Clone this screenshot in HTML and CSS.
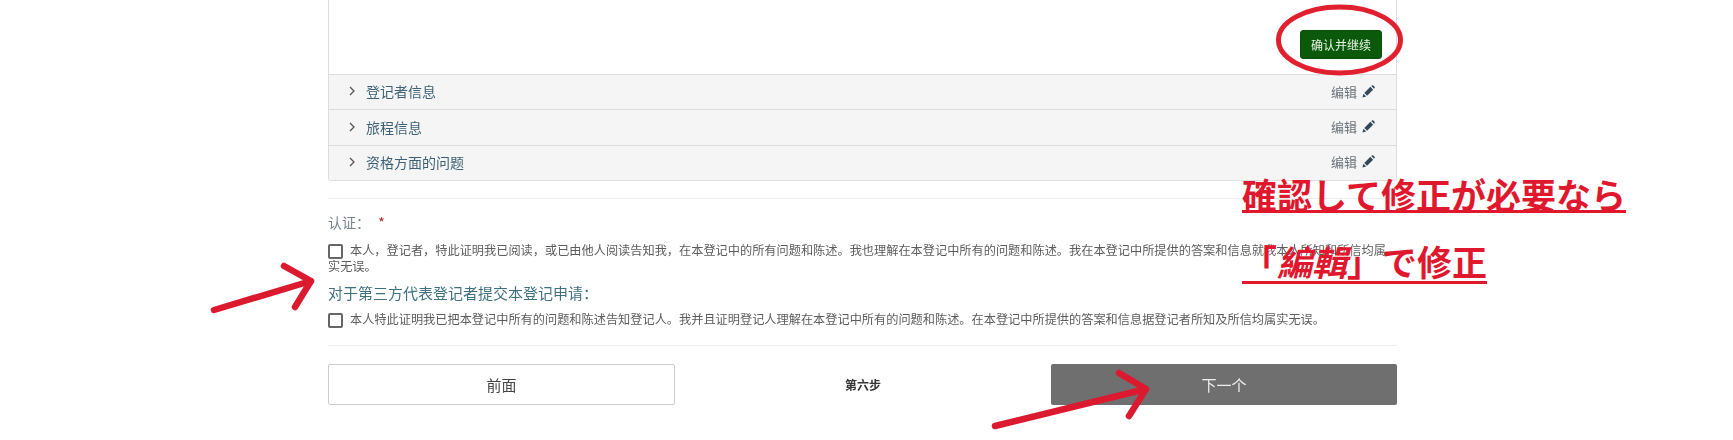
FILE: index.html
```html
<!doctype html>
<html lang="zh">
<head>
  <meta charset="UTF-8" />
  <meta name="viewport" content="width=device-width,initial-scale=1" />
  <title>登记申请</title>
  <link rel="stylesheet" href="styles.css">
</head>
<body>
  <main class="form">
    <section class="panel">
      <div class="panel-top">
        <button class="confirm">确认并继续</button>
      </div>
      <div class="row">
        <svg class="chev" viewBox="0 0 6 10"><path d="M1 1l4 4-4 4"/></svg>
        <span class="row-title">登记者信息</span>
        <a class="edit">编辑<svg class="pencil" viewBox="0 0 14 14"><path d="M0.5 13.5l1-4 3 3zM2.5 8.5l6.500-6.500 3 3-6.500 6.500zM10 1l1-.7q.7-.3 1.200.2l1.300 1.300q.5.500.2 1.200l-.7 1z"/></svg></a>
      </div>
      <div class="row">
        <svg class="chev" viewBox="0 0 6 10"><path d="M1 1l4 4-4 4"/></svg>
        <span class="row-title">旅程信息</span>
        <a class="edit">编辑<svg class="pencil" viewBox="0 0 14 14"><path d="M0.5 13.5l1-4 3 3zM2.5 8.5l6.500-6.500 3 3-6.500 6.500zM10 1l1-.7q.7-.3 1.200.2l1.300 1.300q.5.500.2 1.200l-.7 1z"/></svg></a>
      </div>
      <div class="row">
        <svg class="chev" viewBox="0 0 6 10"><path d="M1 1l4 4-4 4"/></svg>
        <span class="row-title">资格方面的问题</span>
        <a class="edit">编辑<svg class="pencil" viewBox="0 0 14 14"><path d="M0.5 13.5l1-4 3 3zM2.5 8.5l6.500-6.500 3 3-6.500 6.500zM10 1l1-.7q.7-.3 1.200.2l1.300 1.300q.5.500.2 1.200l-.7 1z"/></svg></a>
      </div>
    </section>

    <hr class="rule rule-top">

    <div class="cert-label">认证： <span class="star">*</span></div>
    <label class="check">
      <input type="checkbox">本人，登记者，特此证明我已阅读，或已由他人阅读告知我，在本登记中的所有问题和陈述。我也理解在本登记中所有的问题和陈述。我在本登记中所提供的答案和信息就我本人所知和所信均属实无误。
    </label>
    <h4 class="third">对于第三方代表登记者提交本登记申请：</h4>
    <label class="check check-third">
      <input type="checkbox">本人特此证明我已把本登记中所有的问题和陈述告知登记人。我并且证明登记人理解在本登记中所有的问题和陈述。在本登记中所提供的答案和信息据登记者所知及所信均属实无误。
    </label>

    <hr class="rule rule-bottom">

    <div class="nav">
      <button class="prev">前面</button>
      <div class="step">第六步</div>
      <button class="next">下一个</button>
    </div>
  </main>

  <!-- red annotations drawn over the screenshot -->
  <div class="note note-one">確認して修正が必要なら</div>
  <div class="note note-two">「<em>編輯</em>」で修正</div>
  <svg class="marks" viewBox="0 0 1733 440" aria-hidden="true">
    <ellipse class="ring" cx="1339.500" cy="40" rx="61" ry="33"/>
    <path class="arrow" d="M214 310L311 281M284 266L311 281L295 307"/>
    <path class="arrow" d="M995 426L1146 389M1119 373L1146 389L1129 416"/>
  </svg>
</body>
</html>
```

FILE: styles.css
```css
*{ box-sizing:border-box; }
body{
  margin:0; height:440px; overflow:hidden; position:relative;
  background:#fff;
  font-family:"Noto Sans CJK SC", "Liberation Sans", sans-serif;
}
.form{
  width:1069px;
  margin-left:328px;
  filter:blur(.5px);
}

.panel{ border:1px solid #ddd; border-top:0; border-radius:0 0 3px 3px; }
.panel-top{ height:74px; padding:30px 14px 0 0; display:flex; justify-content:flex-end; align-items:flex-start; }
.confirm{
  width:82px; height:29px; padding:0;
  background:#0b5a0b; color:#e8f2e8;
  border:1px solid #0a4f0a; border-radius:3px;
  font:inherit; font-size:12px;
}
.row{
  height:35.400px; padding:0 21px 2px 20px;
  display:flex; align-items:center;
  background:#f5f5f5;
  border-top:1px solid #ddd;
}
.chev{ width:6px; height:10px; fill:none; stroke:#555; stroke-width:1.300; margin-right:11px; }
.row-title{ color:#3d6074; font-size:14px; }
.edit{ margin-left:auto; display:flex; align-items:center; gap:5px; color:#6a7278; font-size:13px; }
.pencil{ width:13px; height:13px; fill:#33495a; }

.rule{ border:0; border-top:1px solid #eee; margin:0; }
.rule-top{ margin-top:17px; }
.rule-bottom{ margin-top:17px; }

.cert-label{ margin-top:13px; font-family:"Noto Sans CJK TC", sans-serif; font-size:14px; line-height:20px; color:#73838a; }
.star{ color:#b02a2a; margin-left:5px; }
.check{ display:block; margin-top:11px; font-size:12.200px; line-height:15px; color:#5c5c5c; }
.check-third{ margin-top:8px; }
.check input{
  appearance:none; -webkit-appearance:none;
  width:15px; height:15px; margin:0 7px 0 0;
  vertical-align:-4px;
  background:#fff; border:2px solid #666; border-radius:2px;
}
.third{ margin:8px 0 0; font-family:"Noto Sans CJK TC", sans-serif; font-size:15px; font-weight:400; line-height:22px; color:#3f7080; }

.nav{ margin-top:18px; display:grid; grid-template-columns:347px 1fr 346px; align-items:center; }
.prev, .next{ height:41px; padding:0; font:inherit; font-size:15px; border-radius:2px; }
.prev{ background:#fff; color:#444; border:1px solid #ccc; }
.next{ background:#6f6f6f; color:#eee; border:0; }
.step{ text-align:center; font-size:12px; font-weight:700; color:#333; }

.note{
  position:absolute; left:1242px;
  font-size:35px; font-weight:700; white-space:nowrap;
  color:#e0182d;
  font-family:"Noto Sans CJK JP", sans-serif;
  border-bottom:3px solid #e0182d;
}
.note em{ font-style:italic; }
.note-one{ top:178px; line-height:32px; }
.note-two{ top:241px; line-height:40px; }
.marks{ position:absolute; left:0; top:0; width:1733px; height:440px; fill:none; pointer-events:none; }
.ring{ stroke:#e0202e; stroke-width:5; }
.arrow{ stroke:#dc1a2f; stroke-width:6.500; stroke-linecap:round; stroke-linejoin:round; }
```
